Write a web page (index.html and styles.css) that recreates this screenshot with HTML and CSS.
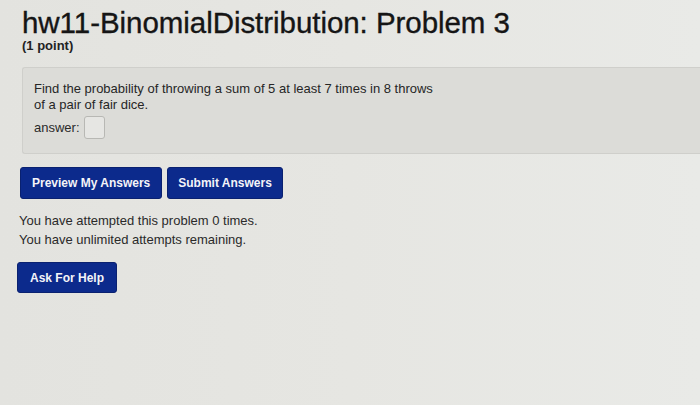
FILE: index.html
```html
<!DOCTYPE html>
<html>
<head>
<meta charset="utf-8">
<link rel="stylesheet" href="styles.css">
</head>
<body>
<div class="page">
  <h1 class="title">hw11-BinomialDistribution: Problem 3</h1>
  <div class="points">(1 point)</div>
  <div class="problem">
    <p class="text">Find the probability of throwing a sum of 5 at least 7 times in 8 throws<br>of a pair of fair dice.</p>
    <div class="answer"><span>answer:</span><span class="input"></span></div>
  </div>
  <div class="buttons">
    <button class="btn">Preview My Answers</button>
    <button class="btn">Submit Answers</button>
  </div>
  <div class="attempts">
    <div>You have attempted this problem 0 times.</div>
    <div>You have unlimited attempts remaining.</div>
  </div>
  <button class="btn help">Ask For Help</button>
</div>
</body>
</html>
```
FILE: styles.css
```css
html, body {
  margin: 0;
  padding: 0;
  width: 700px;
  height: 405px;
  overflow: hidden;
  background: linear-gradient(90deg, #e3e3df 0%, #e6e6e2 50%, #e9eae7 100%);
  font-family: "Liberation Sans", Arial, sans-serif;
  color: #1d1d1d;
}
.page {
  padding: 6px 0 0 22px;
}
.title {
  margin: 0;
  font-size: 29.5px;
  font-weight: normal;
  line-height: 33px;
  color: #151515;
  letter-spacing: -0.05px;
  -webkit-text-stroke: 0.35px #151515;
}
.points {
  font-size: 13px;
  font-weight: bold;
  line-height: 14px;
  margin-top: 0;
  color: #222;
}
.problem {
  margin-top: 14px;
  margin-right: -10px;
  background: #dcdcd8;
  border: 1px solid #cfcfcb;
  border-right: none;
  border-radius: 3px 0 0 3px;
  padding: 13px 12px 14px 11px;
  height: 58px;
}
.text {
  margin: 0;
  font-size: 13px;
  line-height: 16px;
  color: #262626;
}
.answer {
  display: flex;
  align-items: center;
  gap: 4px;
  margin-top: 3px;
  font-size: 13px;
  color: #2a2a2a;
}
.input {
  display: inline-block;
  width: 19px;
  height: 21px;
  border: 1px solid #b8b8b4;
  border-radius: 3px;
  background: #e6e6e3;
}
.buttons {
  display: flex;
  gap: 5px;
  margin: 13px 0 0 -2px;
}
.btn {
  font-family: "Liberation Sans", Arial, sans-serif;
  font-size: 12px;
  font-weight: bold;
  color: #f4f4f8;
  background: #0c2a8c;
  border: 1px solid #0a2170;
  border-radius: 3px;
  height: 32px;
  padding: 0 11px;
  cursor: pointer;
}
.btn + .btn {
  padding: 0 10px;
}
.attempts {
  margin: 12px 0 0 -3px;
  font-size: 13px;
  line-height: 19px;
  color: #2a2a2a;
}
.help {
  margin: 13px 0 0 -5px;
  padding: 0 12px;
  height: 31px;
}
```
